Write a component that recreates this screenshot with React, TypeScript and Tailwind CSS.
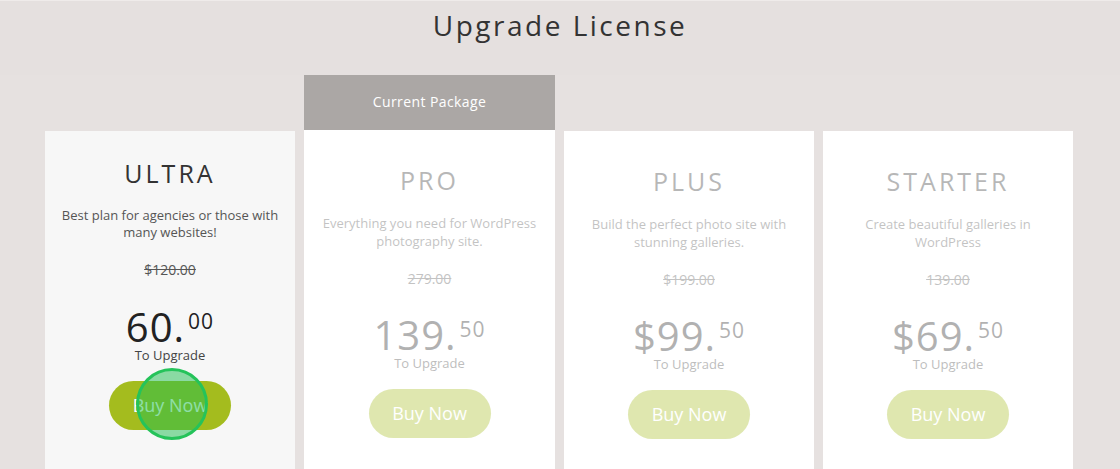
import React from "react";

type Plan = {
  name: string;
  description: string;
  oldPrice: string;
  price: string;
  cents: string;
};

const plans: Plan[] = [
  { name: "PRO", description: "Everything you need for WordPress photography site.", oldPrice: "279.00", price: "139.", cents: "50" },
  { name: "PLUS", description: "Build the perfect photo site with stunning galleries.", oldPrice: "$199.00", price: "$99.", cents: "50" },
  { name: "STARTER", description: "Create beautiful galleries in WordPress", oldPrice: "139.00", price: "$69.", cents: "50" },
];

function PlanBody({ plan, faded }: { plan: Plan; faded?: boolean }) {
  return (
    <div className={`flex flex-col items-center ${faded ? "pt-[34px] opacity-35" : "pt-[26px]"}`}>
      <h2 className="text-[25px] leading-[32px] tracking-[3px] text-[#333]">{plan.name}</h2>
      <p className={`mt-[18px] px-[14px] text-center text-[13px] text-[#555] ${faded ? "leading-[18px]" : "leading-[17px]"}`}>
        {plan.description}
      </p>
      <p className="mt-[19px] text-[14px] leading-[20px] text-[#555] line-through">{plan.oldPrice}</p>
      <div className={`flex items-start text-[#222] ${faded ? "mt-[29px]" : "mt-[30px]"}`}>
        <span className="text-[40px] leading-[34px] tracking-[1px]">{plan.price}</span>
        <span className="mt-[1px] ml-[3px] text-[21px] leading-[20px] tracking-[1px]">{plan.cents}</span>
      </div>
      <p className="mt-[3px] text-[13px] leading-[16px] text-[#444]">To Upgrade</p>
      <button className="relative mt-[18px] h-[49px] w-[122px] rounded-full bg-[#a4bc1e] text-[18px] text-white">
        Buy Now
      </button>
    </div>
  );
}

export default function App() {
  const ultra: Plan = {
    name: "ULTRA",
    description: "Best plan for agencies or those with many websites!",
    oldPrice: "$120.00",
    price: "60.",
    cents: "00",
  };

  return (
    <div
      className="h-[469px] w-[1120px] overflow-hidden bg-[#e6e1e0]"
      style={{ fontFamily: '"Open Sans", "Liberation Sans", sans-serif' }}
    >
      <div className="flex h-[75px] justify-center border-t border-[#efebea] bg-[#e5e0df]">
        <h1 className="mt-[6px] text-[28px] leading-[36px] tracking-[2.5px] text-[#333]">Upgrade License</h1>
      </div>

      <div className="flex items-start gap-[9px] pl-[45px]">
        <div className="relative mt-[56px] h-[340px] w-[250px] bg-[#f7f7f7]">
          <PlanBody plan={ultra} />
          <div className="absolute left-[91px] top-[237px] h-[72px] w-[72px] rounded-full border-[3px] border-[#25c35a] bg-[rgba(30,190,80,0.5)]" />
        </div>

        <div className="flex w-[251px] flex-col">
          <div className="flex h-[55px] items-center justify-center bg-[#aba7a5] pb-[2px] text-[14px] tracking-[0.4px] text-white">
            Current Package
          </div>
          <div className="h-[340px] bg-white">
            <PlanBody plan={plans[0]} faded />
          </div>
        </div>

        {plans.slice(1).map((p) => (
          <div key={p.name} className="mt-[56px] h-[340px] w-[250px] bg-white">
            <PlanBody plan={p} faded />
          </div>
        ))}
      </div>
    </div>
  );
}
